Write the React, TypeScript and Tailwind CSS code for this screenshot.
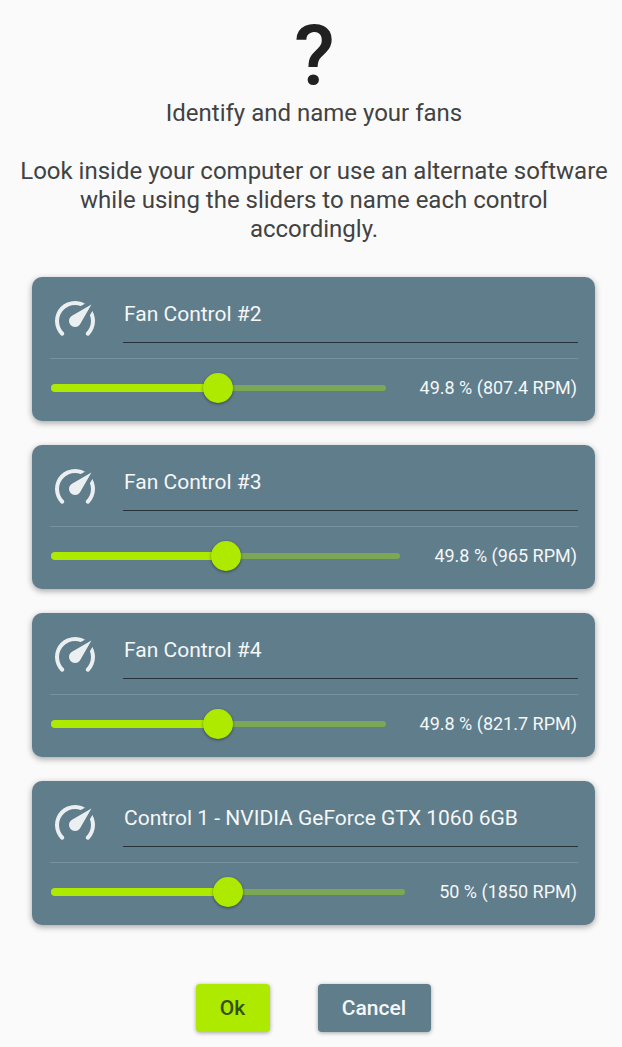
import React from "react";

const fans = [
  { name: "Fan Control #2", percent: 49.8, value: "49.8 % (807.4 RPM)" },
  { name: "Fan Control #3", percent: 49.8, value: "49.8 % (965 RPM)" },
  { name: "Fan Control #4", percent: 49.8, value: "49.8 % (821.7 RPM)" },
  { name: "Control 1 - NVIDIA GeForce GTX 1060 6GB", percent: 50, value: "50 % (1850 RPM)" },
];

const SpeedIcon = () => (
  <svg viewBox="0 0 24 24" className="w-12 h-12 shrink-0 fill-[#eceff1]">
    <path d="M12,16A3,3 0 0,1 9,13C9,11.88 9.61,10.9 10.5,10.39L20.21,4.77L14.68,14.35C14.18,15.33 13.17,16 12,16M12,3C13.81,3 15.5,3.5 16.97,4.32L14.87,5.53C14,5.19 13,5 12,5A8,8 0 0,0 4,13C4,15.21 4.89,17.21 6.34,18.65C6.74,19.04 6.74,19.67 6.35,20.06C5.96,20.45 5.32,20.45 4.93,20.07C3.12,18.26 2,15.76 2,13A10,10 0 0,1 12,3M22,13C22,15.76 20.88,18.26 19.07,20.07C18.68,20.45 18.05,20.45 17.66,20.06C17.27,19.67 17.27,19.04 17.66,18.65C19.11,17.2 20,15.21 20,13C20,12 19.81,11 19.46,10.1L20.67,8C21.5,9.5 22,11.18 22,13Z" />
  </svg>
);

const FanCard = ({ name, percent, value }: { name: string; percent: number; value: string }) => (
  <div className="h-36 rounded-[10px] bg-[#607d8b] pl-[18px] pr-[17px] shadow-[0_2px_6px_rgba(0,0,0,0.35)]">
    <div className="flex h-[82px] border-b border-[#78919d]">
      <div className="pl-[1px] pt-[18px]">
        <SpeedIcon />
      </div>
      <div className="ml-[24px] flex-1 pt-[23px]">
        <div className="h-[43px] border-b border-[#263238] pl-[1px] text-[21px] leading-[28px] text-[#f5f7f8]">{name}</div>
      </div>
    </div>
    <div className="flex items-center pl-[1px] pt-[14px]">
      <div className="relative h-[6px] flex-1 rounded-full bg-[#7ca855]">
        <div
          className="absolute top-1/2 h-2 -translate-y-1/2 rounded-full bg-[#aeea00]"
          style={{ width: `${percent}%` }}
        />
        <div className="absolute left-1/2 top-1/2 h-[30px] w-[30px] -translate-x-1/2 -translate-y-1/2 rounded-full bg-[#aeea00] shadow-[0_1px_3px_rgba(0,0,0,0.45)]" />
      </div>
      <div className="ml-[34px] mr-[1px] text-[18px] leading-[30px] text-[#f5f7f8]">{value}</div>
    </div>
  </div>
);

export default function App() {
  return (
    <div className="flex h-[1047px] flex-col items-center overflow-hidden bg-[#fafafa] font-['Roboto',sans-serif]">
      <div className="ml-[7px] h-[98px] pt-[8px] text-[84px] leading-[98px] font-medium text-[#212121]">?</div>
      <p className="ml-[6px] mt-[1px] text-[24px] leading-[29px] text-[#424242]">Identify and name your fans</p>
      <p className="ml-[6px] mt-[29px] w-[600px] text-center text-[24px] leading-[29px] text-[#424242]">
        Look inside your computer or use an alternate software while using the sliders to name each control accordingly.
      </p>
      <div className="mt-[33px] flex w-full flex-col gap-6 pl-8 pr-[27px]">
        {fans.map((fan) => (
          <FanCard key={fan.name} {...fan} />
        ))}
      </div>
      <div className="ml-[4px] mt-[59px] flex gap-12">
        <button className="h-12 w-[74px] rounded-[4px] bg-[#aeea00] pt-[2px] text-[21px] font-medium text-[#33510a] shadow-[0_1px_4px_rgba(0,0,0,0.35)]">
          Ok
        </button>
        <button className="h-12 w-[113px] rounded-[4px] bg-[#607d8b] pt-[2px] text-[21px] font-medium text-[#f5f7f8] shadow-[0_1px_4px_rgba(0,0,0,0.35)]">
          Cancel
        </button>
      </div>
    </div>
  );
}
